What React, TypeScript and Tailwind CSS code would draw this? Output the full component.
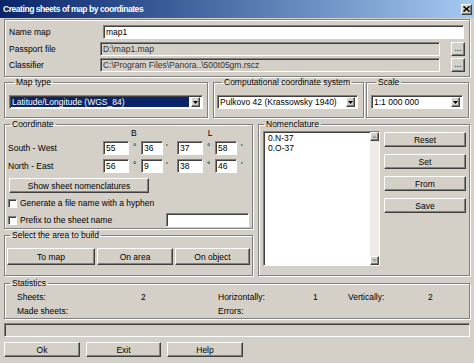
import React from "react"

const raised =
  "bg-[#d4d0c8] border border-t-white border-l-white border-r-[#404040] border-b-[#404040] shadow-[inset_-1px_-1px_0_#808080]"
const sunken =
  "border border-t-[#808080] border-l-[#808080] border-r-white border-b-white shadow-[inset_1px_1px_0_#404040]"
const etched = "border border-[#808080] shadow-[inset_1px_1px_0_#fff,1px_1px_0_#fff]"

function Btn({ children, className = "" }: { children?: React.ReactNode; className?: string }) {
  return (
    <button className={`${raised} flex shrink-0 items-center justify-center leading-[10px] text-black ${className}`}>
      {children}
    </button>
  )
}

function Group({ title, className = "", children }: { title: string; className?: string; children?: React.ReactNode }) {
  return (
    <fieldset className={`${etched} min-w-0 shrink-0 ${className}`}>
      <legend className="ml-[5px] px-[2px] leading-[10px]">{title}</legend>
      {children}
    </fieldset>
  )
}

function Arrow({ up = false, color = "#000" }: { up?: boolean; color?: string }) {
  return (
    <svg width="5" height="3" viewBox="0 0 5 3">
      <path d={up ? "M2.5 0 L5 3 L0 3 Z" : "M0 0 L5 0 L2.5 3 Z"} fill={color} />
    </svg>
  )
}

function Combo({ value, selected = false, className = "" }: { value: string; selected?: boolean; className?: string }) {
  return (
    <div className={`${sunken} bg-white flex items-center h-[14px] p-[1px] ${className}`}>
      <div className={`flex-1 h-full flex items-center pl-[1px] truncate ${selected ? "bg-[#0a246a] text-white" : ""}`}>
        {value}
      </div>
      <div className={`${raised} w-[9px] h-[10px] ml-[2px] mr-[1px] flex items-center justify-center`}>
        <Arrow />
      </div>
    </div>
  )
}

function Field({ value, className = "" }: { value: string; className?: string }) {
  return (
    <div className={`${sunken} bg-white h-[14px] flex items-center pl-[2px] ${className}`}>{value}</div>
  )
}

function Check({ label }: { label: string }) {
  return (
    <div className="flex items-center">
      <div className={`${sunken} bg-white w-[9px] h-[9px]`} />
      <span className="ml-[3px]">{label}</span>
    </div>
  )
}

function CoordRow({ label, v }: { label: string; v: string[] }) {
  return (
    <div className="flex items-center h-[14px] pl-[3px]">
      <span className="w-[95px]">{label}</span>
      <Field value={v[0]} className="w-[26px]" />
      <span className="w-[12px] pl-[4px] self-start pt-[1px]">°</span>
      <Field value={v[1]} className="w-[22px]" />
      <span className="w-[14px] pl-[3px] self-start pt-[1px]">'</span>
      <Field value={v[2]} className="w-[26px]" />
      <span className="w-[12px] pl-[4px] self-start pt-[1px]">°</span>
      <Field value={v[3]} className="w-[22px]" />
      <span className="pl-[4px] self-start pt-[1px]">'</span>
    </div>
  )
}

export default function App() {
  return (
    <div className="w-[474px] h-[363px] bg-[#d4d0c8] flex flex-col overflow-hidden font-['Liberation_Sans',Arial,sans-serif] text-[8.5px] leading-[10px] text-black select-none">
      {/* title bar */}
      <div className="h-[18px] shrink-0 flex items-center justify-between pl-[3px] pr-[2px] bg-linear-to-r from-[#0a246a] to-[#a6caf0]">
        <span className="text-white font-bold tracking-[-0.45px]">Creating sheets of map by coordinates</span>
        <button className={`${raised} w-[11px] h-[11px] flex items-center justify-center`}>
          <svg width="7" height="6" viewBox="0 0 7 6">
            <path d="M0.5 0.5 L6.5 5.5 M6.5 0.5 L0.5 5.5" stroke="#000" strokeWidth="1.6" />
          </svg>
        </button>
      </div>

      {/* files */}
      <div className={`${etched} mx-[4px] mt-[1px] h-[58px] shrink-0 flex flex-col pt-[5px] pl-[4px]`}>
        <div className="flex items-center h-[14px]">
          <span className="w-[94px]">Name map</span>
          <Field value="map1" className="w-[361px]" />
        </div>
        <div className="flex items-center h-[14px] mt-[3px]">
          <span className="w-[91px]">Passport file</span>
          <div className={`${sunken} h-[14px] w-[340px] flex items-center pl-[2px] text-[#333]`}>D:\map1.map</div>
          <Btn className="w-[14px] h-[14px] ml-[11px] pb-[3px]">...</Btn>
        </div>
        <div className="flex items-center h-[14px] mt-[2px]">
          <span className="w-[91px]">Classifier</span>
          <div className={`${sunken} h-[14px] w-[340px] flex items-center pl-[2px] text-[#333]`}>
            C:\Program Files\Panora..\500t05gm.rscz
          </div>
          <Btn className="w-[14px] h-[14px] ml-[11px] pb-[3px]">...</Btn>
        </div>
      </div>

      {/* map type / system / scale */}
      <div className="flex mx-[4px] shrink-0">
        <Group title="Map type" className="w-[204px] h-[41px] px-[4px]">
          <Combo value="Latitude/Longitude (WGS_84)" selected className="mt-[8px] w-[194px]" />
        </Group>
        <Group title="Computational coordinate system" className="w-[151px] h-[41px] ml-[5px] px-[3px]">
          <Combo value="Pulkovo 42 (Krassowsky 1940)" className="mt-[8px] w-[141px]" />
        </Group>
        <Group title="Scale" className="w-[103px] h-[41px] ml-[2px] px-[4px]">
          <Combo value="1:1 000 000" className="mt-[8px] w-[92px]" />
        </Group>
      </div>

      {/* coordinate + nomenclature */}
      <div className="flex mx-[4px] mt-[1px] shrink-0">
        <div className="flex flex-col w-[249px]">
          <Group title="Coordinate" className="h-[110px]">
            <div className="flex h-[10px] -mt-[1px]">
              <span className="ml-[126px]">B</span>
              <span className="ml-[71px]">L</span>
            </div>
            <div className="mt-[3px]">
              <CoordRow label="South - West" v={["55", "36", "37", "58"]} />
            </div>
            <div className="mt-[4px]">
              <CoordRow label="North - East" v={["56", "9", "38", "46"]} />
            </div>
            <Btn className="w-[140px] h-[15px] ml-[4px] mt-[5px]">Show sheet nomenclatures</Btn>
            <div className="pl-[3px] mt-[5px]">
              <Check label="Generate a file name with a hyphen" />
            </div>
            <div className="flex items-center pl-[3px] mt-[5px]">
              <div className="w-[158px]">
                <Check label="Prefix to the sheet name" />
              </div>
              <Field value="" className="w-[83px] h-[13px]" />
            </div>
          </Group>
          <Group title="Select the area to build" className="h-[46px] mt-[1px]">
            <div className="flex mt-[8px] ml-[2px]">
              <Btn className="w-[88px] h-[17px]">To map</Btn>
              <Btn className="w-[76px] h-[17px] ml-[2px]">On area</Btn>
              <Btn className="w-[75px] h-[17px] ml-[2px]">On object</Btn>
            </div>
          </Group>
        </div>

        <Group title="Nomenclature" className="w-[212px] h-[157px] ml-[5px]">
          <div className="flex">
            <div className={`${sunken} bg-white w-[117px] h-[135px] ml-[4px] mt-[2px] flex`}>
              <div className="flex-1 pl-[4px] pt-[1px] flex flex-col">
                <span>0.N-37</span>
                <span>0.O-37</span>
              </div>
              <div className="w-[9px] bg-[#ecebe6] flex flex-col justify-between">
                <div className={`${raised} h-[9px] flex items-center justify-center`}>
                  <Arrow up color="#a0a0a0" />
                </div>
                <div className={`${raised} h-[9px] flex items-center justify-center`}>
                  <Arrow color="#a0a0a0" />
                </div>
              </div>
            </div>
            <div className="flex flex-col ml-[4px] mt-[3px] gap-[7px]">
              <Btn className="w-[82px] h-[15px]">Reset</Btn>
              <Btn className="w-[82px] h-[15px]">Set</Btn>
              <Btn className="w-[82px] h-[15px]">From</Btn>
              <Btn className="w-[82px] h-[15px]">Save</Btn>
            </div>
          </div>
        </Group>
      </div>

      {/* statistics */}
      <Group title="Statistics" className="mx-[4px] mt-[2px] h-[41px]">
        <div className="flex mt-[4px] pl-[12px]">
          <span className="w-[124px]">Sheets:</span>
          <span className="w-[77px]">2</span>
          <span className="w-[95px]">Horizontally:</span>
          <span className="w-[35px]">1</span>
          <span className="w-[80px]">Vertically:</span>
          <span>2</span>
        </div>
        <div className="flex mt-[4px] pl-[12px]">
          <span className="w-[201px]">Made sheets:</span>
          <span>Errors:</span>
        </div>
      </Group>

      {/* progress */}
      <div className={`${sunken} mx-[4px] mt-[4px] h-[14px] shrink-0`} />

      {/* buttons */}
      <div className="flex mt-[5px] ml-[4px] shrink-0">
        <Btn className="w-[76px] h-[15px]">Ok</Btn>
        <Btn className="w-[75px] h-[15px] ml-[6px]">Exit</Btn>
        <Btn className="w-[76px] h-[15px] ml-[6px]">Help</Btn>
      </div>
    </div>
  )
}
